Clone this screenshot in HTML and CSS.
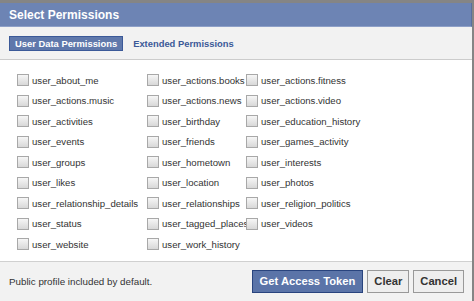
FILE: index.html
```html
<!DOCTYPE html>
<html>
<head>
<meta charset="utf-8">
<link rel="stylesheet" href="styles.css">
</head>
<body>
<div class="dialog">
  <div class="title">Select Permissions</div>
  <div class="tabs">
    <span class="tab active">User Data Permissions</span>
    <span class="tab">Extended Permissions</span>
  </div>
  <div class="content">
    <div class="grid">
      <label class="perm"><span class="cb"></span>user_about_me</label>
      <label class="perm"><span class="cb"></span>user_actions.books</label>
      <label class="perm"><span class="cb"></span>user_actions.fitness</label>
      <label class="perm"><span class="cb"></span>user_actions.music</label>
      <label class="perm"><span class="cb"></span>user_actions.news</label>
      <label class="perm"><span class="cb"></span>user_actions.video</label>
      <label class="perm"><span class="cb"></span>user_activities</label>
      <label class="perm"><span class="cb"></span>user_birthday</label>
      <label class="perm"><span class="cb"></span>user_education_history</label>
      <label class="perm"><span class="cb"></span>user_events</label>
      <label class="perm"><span class="cb"></span>user_friends</label>
      <label class="perm"><span class="cb"></span>user_games_activity</label>
      <label class="perm"><span class="cb"></span>user_groups</label>
      <label class="perm"><span class="cb"></span>user_hometown</label>
      <label class="perm"><span class="cb"></span>user_interests</label>
      <label class="perm"><span class="cb"></span>user_likes</label>
      <label class="perm"><span class="cb"></span>user_location</label>
      <label class="perm"><span class="cb"></span>user_photos</label>
      <label class="perm"><span class="cb"></span>user_relationship_details</label>
      <label class="perm"><span class="cb"></span>user_relationships</label>
      <label class="perm"><span class="cb"></span>user_religion_politics</label>
      <label class="perm"><span class="cb"></span>user_status</label>
      <label class="perm"><span class="cb"></span>user_tagged_places</label>
      <label class="perm"><span class="cb"></span>user_videos</label>
      <label class="perm"><span class="cb"></span>user_website</label>
      <label class="perm"><span class="cb"></span>user_work_history</label>
    </div>
  </div>
  <div class="footer">
    <span class="note">Public profile included by default.</span>
    <div class="buttons">
      <span class="btn primary">Get Access Token</span>
      <span class="btn">Clear</span>
      <span class="btn">Cancel</span>
    </div>
  </div>
</div>
</body>
</html>
```
FILE: styles.css
```css
html, body {
  margin: 0;
  padding: 0;
  background: #ffffff;
}
body {
  width: 474px;
  height: 301px;
  overflow: hidden;
  font-family: "Liberation Sans", Arial, sans-serif;
}
.dialog {
  height: 298px;
  border-top: 3px solid #858585;
  border-right: 2px solid #858585;
  display: flex;
  flex-direction: column;
  background: #ffffff;
}
.title {
  height: 23px;
  background: #6d84b4;
  border-right: 1px solid #5a70a0;
  color: #ffffff;
  font-weight: bold;
  font-size: 12px;
  line-height: 24px;
  padding-left: 9px;
  border-bottom: 1px solid #8ea0c8;
}
.tabs {
  height: 31px;
  background: #f2f2f2;
  border-bottom: 1px solid #cccccc;
  display: flex;
  align-items: center;
  gap: 4px;
  padding-left: 9px;
  padding-top: 1px;
}
.tab {
  font-size: 9.4px;
  font-weight: bold;
  color: #3b5998;
  line-height: 13px;
  padding: 0 5px;
  border: 1px solid transparent;
}
.tab.active {
  background: #5f78ab;
  border-color: #3b5998;
  color: #ffffff;
}
.content {
  flex: 1;
  padding: 10px 0 0 17px;
}
.grid {
  display: grid;
  grid-template-columns: 130px 99px 1fr;
  grid-auto-rows: 20.5px;
}
.perm {
  display: flex;
  align-items: center;
  gap: 3px;
  font-size: 9.6px;
  color: #333333;
  white-space: nowrap;
}
.cb {
  width: 10px;
  height: 10px;
  flex: none;
  border: 1px solid #a8a8a8;
  background: linear-gradient(#f6f6f6, #d8d8d8);
}
.footer {
  height: 39px;
  background: #f2f2f2;
  border-top: 1px solid #d0d0d0;
  display: flex;
  align-items: center;
  justify-content: space-between;
  padding: 0 8px 0 9px;
}
.note {
  font-size: 9.8px;
  color: #333333;
}
.buttons {
  display: flex;
  gap: 4px;
}
.btn {
  font-size: 11.2px;
  font-weight: bold;
  color: #333333;
  background: #eeeeee;
  border: 1px solid #999999;
  line-height: 21px;
  padding: 0 6px;
}
.btn.primary {
  background: #5b74a8;
  border-color: #29447e;
  color: #ffffff;
  padding: 0 7px;
}
```
